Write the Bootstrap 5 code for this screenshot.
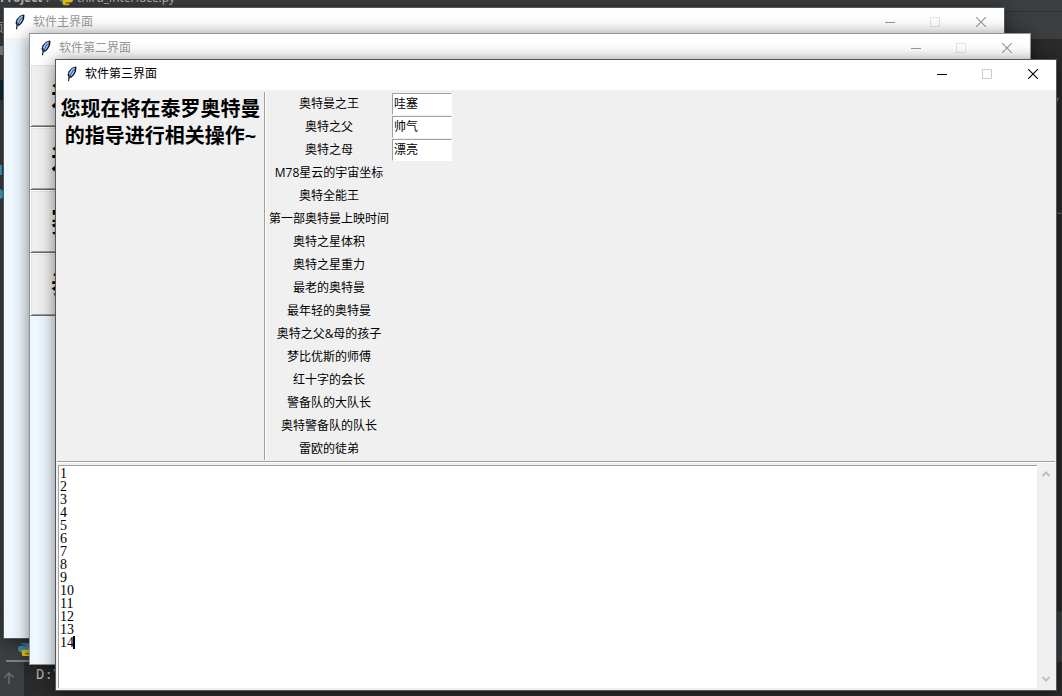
<!DOCTYPE html>
<html lang="zh-CN">
<head>
<meta charset="utf-8">
<meta name="viewport" content="width=device-width, initial-scale=1">
<title>软件第三界面</title>
<link href="https://cdn.jsdelivr.net/npm/bootstrap@5.3.0/dist/css/bootstrap.min.css" rel="stylesheet">
<style>
body { font-family: "Open Sans", "Noto Sans CJK SC", sans-serif; font-size: 12px; color: #000; background: #2b2b2b; }
button { border: 0; padding: 0; background: transparent; }
.desk { height: 100vh; }

/* editor behind the windows */
.ide { background: #3c3f41; color: #bbb; font-family: "Open Sans", sans-serif; }
.crumbs { height: 12px; padding-bottom: 5px; font-size: 12px; line-height: 17px; border-bottom: 1px solid #323232; flex: none; }
.toolline { height: 27px; flex: none; }
.rail { width: 24px; font: 12px "Noto Sans CJK SC", sans-serif; }
.rail-word { height: 20px; line-height: 20px; margin-left: -8px; margin-top: -22px; }
.rail-scroll { height: 9px; margin-top: 9px; background: #8a9193; }
.rail-pick { height: 20px; margin-top: 25px; background: #0d293e; }
.rail-mark { height: 10px; width: 2px; margin-top: 65px; background: #3ea9d0; }
.rail-dot { height: 10px; width: 14px; margin: 14px 0 0 -10px; border-radius: 5px; background: #3ea9d0; }
.code { background: #2b2b2b; text-align: right; font: 13px "Liberation Mono", monospace; }
.code-comma { color: #cc7832; padding-top: 49px; line-height: 18px; padding-right: 0; }
.code-wave { color: #75805a; padding-top: 101px; line-height: 14px; }
.tabline { height: 51px; border-top: 1px solid #323232; flex: none; padding: 28px 0 0 6px; }
.tab-item { width: 60px; height: 23px; padding: 2px 0 0 12px; border-bottom: 3px solid #7d8489; }
.console { height: 34px; flex: none; }
.console-side { width: 24px; padding: 9px 0 0 3px; background: #3c3f41; }
.console-out { background: #2b2b2b; padding: 3px 12px; font: 14px/18px "DejaVu Sans Mono", monospace; color: #bbb; }

/* windows */
.win { position: absolute; display: flex; flex-direction: column; border: 1px solid #55585a; box-shadow: 0 2px 16px rgba(0,0,0,.5); background: #f0f8ff; }
.win-main { left: 3px; top: 7px; right: 57px; bottom: 57px; }
.win-second { left: 29px; top: 33px; right: 31px; bottom: 31px; border-color: #909498; }
.win-third { left: 55px; top: 59px; right: 5px; bottom: 5px; background: #f0f0f0; }
.bar { height: 30px; flex: none; padding-left: 8px; padding-bottom: 2px; background: #fff; }
.bar h1 { font-size: 12px; line-height: 18px; font-weight: 400; margin: 0 0 0 5px; }
.bar button { width: 46px; height: 28px; }
.bar svg, .ide svg, .scroll svg { display: block; }
.idle h1, .idle .bar button { color: #999; }
.off { color: #ccc; }
.idle .bar .off { color: #e5e5e5; }
.pick { height: 63px; flex: none; padding-left: 20px; text-align: left; font-size: 27px; font-weight: 700; line-height: 40px; background: #f0f0f0; color: #000; border: 1px solid #fff; border-bottom: 1px solid #696969; box-shadow: inset 1px 1px #e3e3e3, inset -1px -1px #a0a0a0; }

/* third window */
.upper { padding-top: 2px; flex: none; }
.notice { width: 208px; padding: 3px 0 0 1px; font-size: 20px; line-height: 27px; font-weight: 700; text-align: center; margin: 0; }
.rule-v { width: 2px; background: #a0a0a0; border-right: 1px solid #fff; margin-right: 1px; }
.form-line { height: 23px; }
.form-line label { width: 124px; text-align: center; line-height: 23px; }
.form-line input { width: 60px; height: 22px; margin: 1px 0 0 1px; padding: 0 1px 2px; border: 1px solid #fff; border-top-color: #a0a0a0; border-left: 1px solid #a0a0a0; border-radius: 0; background: #fff; font-size: 12px; outline: 0; }
.rule-h { flex: none; height: 2px; margin: 1px 1px 2px; background: #a0a0a0; border-bottom: 1px solid #fff; }
.lower { padding: 0 0 2px 2px; min-height: 0; }
.log { border: 0; border-top: 1px solid #a0a0a0; border-left: 1px solid #a0a0a0; padding: 1px 1px; font: 14px/13px "Liberation Serif", serif; color: #000; resize: none; overflow: hidden; outline: 0; background: #fff; display: block; }
.caret { position: absolute; left: 15px; top: 171px; width: 2px; height: 13px; background: #000; }
.scroll { width: 18px; margin-left: 1px; color: #bfbfbf; }
.scroll button { height: 18px; color: inherit; padding-left: 4px; }
</style>
</head>
<body>
<svg width="0" height="0" class="position-absolute" aria-hidden="true">
  <symbol id="feather" viewBox="0 0 16 16">
    <path d="M4 15 L4.500 11 L3.500 9 L4.500 5.500 L8 1.800 L11.500 .5 L12.500 1 L12 5.500 L10 9 L7.500 11.500 L5.500 12 L5 15.500Z" fill="#111"/>
    <path d="M5 10.500 L4.800 7 L7.500 3.500 L11.200 1.500 L10.800 5 L9 8 L6.800 10.500Z" fill="#3978c8"/>
    <path d="M5.500 8 L8 4 L10.500 2 M7 9.500 L10 5" fill="none" stroke="#a9cdf5" stroke-width="1.400"/>
    <path d="M5 13 L7 8.500 L9.500 4" fill="none" stroke="#173463" stroke-width=".5"/>
  </symbol>
  <symbol id="py" viewBox="0 0 16 16">
    <path d="M5 1h5q2 0 2 2v4q0 1-2 1H6q-2 0-2 3H2q-2-1-2-4 0-3 3-3h5V3H4q0-2 1-2Z" fill="#3e93bd"/>
    <path d="M11 15H6q-2 0-2-2V9.500Q4 8 6 8h4q2 0 2-3h2q2 1 2 4 0 3-3 3H8v1h4q0 2-1 2Z" fill="#f4c817"/>
  </symbol>
  <symbol id="min" viewBox="0 0 12 10"><path d="M2 5.500h10" stroke="currentColor"/></symbol>
  <symbol id="max" viewBox="0 0 10 10"><path d="M.5.5h9v9h-9z" fill="none" stroke="currentColor"/></symbol>
  <symbol id="shut" viewBox="0 0 10 10"><path d="M0 0l10 10M10 0L0 10" stroke="currentColor" stroke-width="1.100"/></symbol>
</svg>

<div class="desk position-relative overflow-hidden">
  <div class="ide h-100 d-flex flex-column overflow-hidden">
    <div class="crumbs d-flex align-items-end overflow-hidden">
      <b>Project</b><span class="px-1">/</span>
      <svg class="ms-1" width="14" height="14"><use href="#py"/></svg><span class="ps-1">third_interface.py</span>
    </div>
    <div class="toolline"></div>
    <div class="flex-grow-1 d-flex">
      <div class="rail">
        <div class="rail-word">页</div>
        <div class="rail-scroll"></div>
        <div class="rail-pick"></div>
        <div class="rail-mark"></div>
        <div class="rail-dot"></div>
      </div>
      <div class="code flex-grow-1">
        <div class="code-comma">,</div>
        <div class="code-wave">~</div>
      </div>
    </div>
    <div class="tabline"><div class="tab-item"><svg width="15" height="15"><use href="#py"/></svg></div></div>
    <div class="console d-flex">
      <div class="console-side"><svg width="12" height="14" viewBox="0 0 12 14"><path d="M6 13V2M1.500 6.500L6 2l4.500 4.500" fill="none" stroke="#6b6e70" stroke-width="1.500"/></svg></div>
      <div class="console-out flex-grow-1">D:\</div>
    </div>
  </div>

  <section class="win win-main idle">
    <header class="bar d-flex align-items-center">
      <svg width="16" height="16"><use href="#feather"/></svg><h1 class="flex-grow-1">软件主界面</h1>
      <button aria-label="最小化"><svg class="mx-auto" width="12" height="10"><use href="#min"/></svg></button>
      <button class="off" aria-label="最大化"><svg class="mx-auto" width="10" height="10"><use href="#max"/></svg></button>
      <button aria-label="关闭"><svg class="mx-auto" width="10" height="10"><use href="#shut"/></svg></button>
    </header>
  </section>

  <section class="win win-second idle">
    <header class="bar d-flex align-items-center">
      <svg width="16" height="16"><use href="#feather"/></svg><h1 class="flex-grow-1">软件第二界面</h1>
      <button aria-label="最小化"><svg class="mx-auto" width="12" height="10"><use href="#min"/></svg></button>
      <button class="off" aria-label="最大化"><svg class="mx-auto" width="10" height="10"><use href="#max"/></svg></button>
      <button aria-label="关闭"><svg class="mx-auto" width="10" height="10"><use href="#shut"/></svg></button>
    </header>
    <div class="d-flex flex-column">
      <button class="pick">迪</button>
      <button class="pick">迪</button>
      <button class="pick">赛</button>
      <button class="pick">泰</button>
    </div>
  </section>

  <section class="win win-third">
    <header class="bar d-flex align-items-center">
      <svg width="16" height="16"><use href="#feather"/></svg><h1 class="flex-grow-1">软件第三界面</h1>
      <button aria-label="最小化"><svg class="mx-auto" width="12" height="10"><use href="#min"/></svg></button>
      <button class="off" aria-label="最大化"><svg class="mx-auto" width="10" height="10"><use href="#max"/></svg></button>
      <button aria-label="关闭"><svg class="mx-auto" width="10" height="10"><use href="#shut"/></svg></button>
    </header>
    <div class="upper d-flex">
      <p class="notice">您现在将在泰罗奥特曼<br>的指导进行相关操作~</p>
      <div class="rule-v"></div>
      <form>
        <div class="form-line d-flex"><label for="f1">奥特曼之王</label><input id="f1" type="text" value="哇塞"></div>
        <div class="form-line d-flex"><label for="f2">奥特之父</label><input id="f2" type="text" value="帅气"></div>
        <div class="form-line d-flex"><label for="f3">奥特之母</label><input id="f3" type="text" value="漂亮"></div>
        <div class="form-line d-flex"><label>M78星云的宇宙坐标</label></div>
        <div class="form-line d-flex"><label>奥特全能王</label></div>
        <div class="form-line d-flex"><label>第一部奥特曼上映时间</label></div>
        <div class="form-line d-flex"><label>奥特之星体积</label></div>
        <div class="form-line d-flex"><label>奥特之星重力</label></div>
        <div class="form-line d-flex"><label>最老的奥特曼</label></div>
        <div class="form-line d-flex"><label>最年轻的奥特曼</label></div>
        <div class="form-line d-flex"><label>奥特之父&amp;母的孩子</label></div>
        <div class="form-line d-flex"><label>梦比优斯的师傅</label></div>
        <div class="form-line d-flex"><label>红十字的会长</label></div>
        <div class="form-line d-flex"><label>警备队的大队长</label></div>
        <div class="form-line d-flex"><label>奥特警备队的队长</label></div>
        <div class="form-line d-flex"><label>雷欧的徒弟</label></div>
      </form>
    </div>
    <div class="rule-h"></div>
    <div class="lower d-flex flex-grow-1">
      <div class="position-relative flex-grow-1">
        <textarea class="log w-100 h-100" aria-label="输出" spellcheck="false">1
2
3
4
5
6
7
8
9
10
11
12
13
14</textarea>
        <span class="caret"></span>
      </div>
      <div class="scroll d-flex flex-column justify-content-between">
        <button aria-label="向上滚动"><svg width="8" height="6" viewBox="0 0 8 6"><path d="M.5 5L4 1.500 7.500 5" fill="none" stroke="currentColor" stroke-width="2"/></svg></button>
        <button aria-label="向下滚动"><svg width="8" height="6" viewBox="0 0 8 6"><path d="M.5 1L4 4.500 7.500 1" fill="none" stroke="currentColor" stroke-width="2"/></svg></button>
      </div>
    </div>
  </section>
</div>
<script src="https://cdn.jsdelivr.net/npm/bootstrap@5.3.0/dist/js/bootstrap.bundle.min.js"></script>
</body>
</html>
